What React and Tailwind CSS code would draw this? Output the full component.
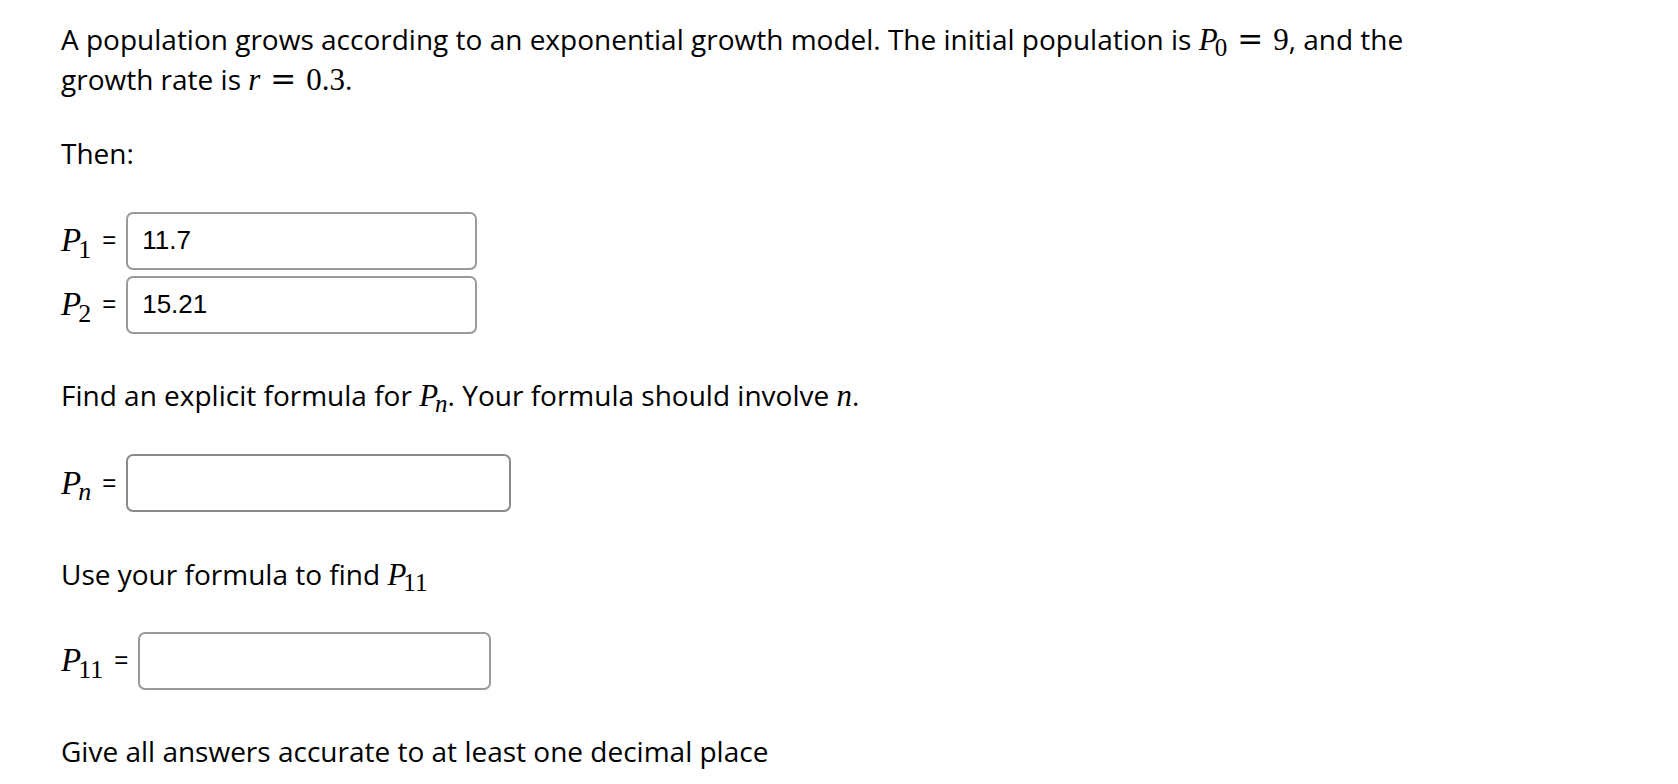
import React from "react";

const serif = "font-['Liberation_Serif','DejaVu_Serif',serif]";

function P({ sub, big = false }) {
  return (
    <span className={`${serif} ${big ? "text-[33px]" : "text-[31px]"} whitespace-nowrap`}>
      <i>P</i>
      <sub
        className={`${big ? "text-[26px]" : "text-[25px]"} ml-[-3px] not-italic bottom-[-0.25em]`}
      >
        {sub}
      </sub>
    </span>
  );
}

function Var({ children }) {
  return <i className={`${serif} text-[31px]`}>{children}</i>;
}

function Num({ children }) {
  return <span className={`${serif} text-[31px]`}>{children}</span>;
}

function Eq() {
  return (
    <span className="font-['DejaVu_Serif',serif] text-[31px] ml-[10px] mr-[10px]">=</span>
  );
}

function AnswerRow({ sub, value, width, borderColor = "border-[#9a9a9a]" }) {
  return (
    <div className="flex items-center h-[58px]">
      <span className="leading-none">
        <P sub={sub} big />
      </span>
      <span className="font-['Liberation_Sans',Arial,sans-serif] text-[24px] ml-[11px] mr-[10px]">=</span>
      <input
        type="text"
        readOnly
        value={value}
        className={`h-[58px] border-2 ${borderColor} rounded-[7px] px-[14px] text-[26px] text-black font-['Liberation_Sans',Arial,sans-serif] outline-none ${width}`}
      />
    </div>
  );
}

export default function App() {
  return (
    <div className="min-h-[784px] bg-white text-black font-['Open_Sans',sans-serif] text-[28px] leading-[38.5px] pl-[61px] pt-[20px]">
      <p className="max-w-[1400px]">
        A population grows according to an exponential growth model. The initial population is{" "}
        <P sub="0" />
        <Eq />
        <Num>9</Num>, and the growth rate is <Var>r</Var>
        <Eq />
        <Num>0.3</Num>.
      </p>

      <p className="mt-[35px]">Then:</p>

      <div className="mt-[39px] flex flex-col gap-[6px]">
        <AnswerRow sub="1" value="11.7" width="w-[351px]" />
        <AnswerRow sub="2" value="15.21" width="w-[351px]" />
      </div>

      <p className="mt-[42px]">
        Find an explicit formula for <P sub={<i>n</i>} />. Your formula should involve <Var>n</Var>.
      </p>

      <div className="mt-[39px]">
        <AnswerRow sub={<i>n</i>} value="" width="w-[385px]" borderColor="border-[#8a8a8a]" />
      </div>

      <p className="mt-[43px]">
        Use your formula to find <P sub="11" />
      </p>

      <div className="mt-[37px]">
        <AnswerRow sub="11" value="" width="w-[353px]" />
      </div>

      <p className="mt-[42px]">Give all answers accurate to at least one decimal place</p>
    </div>
  );
}
